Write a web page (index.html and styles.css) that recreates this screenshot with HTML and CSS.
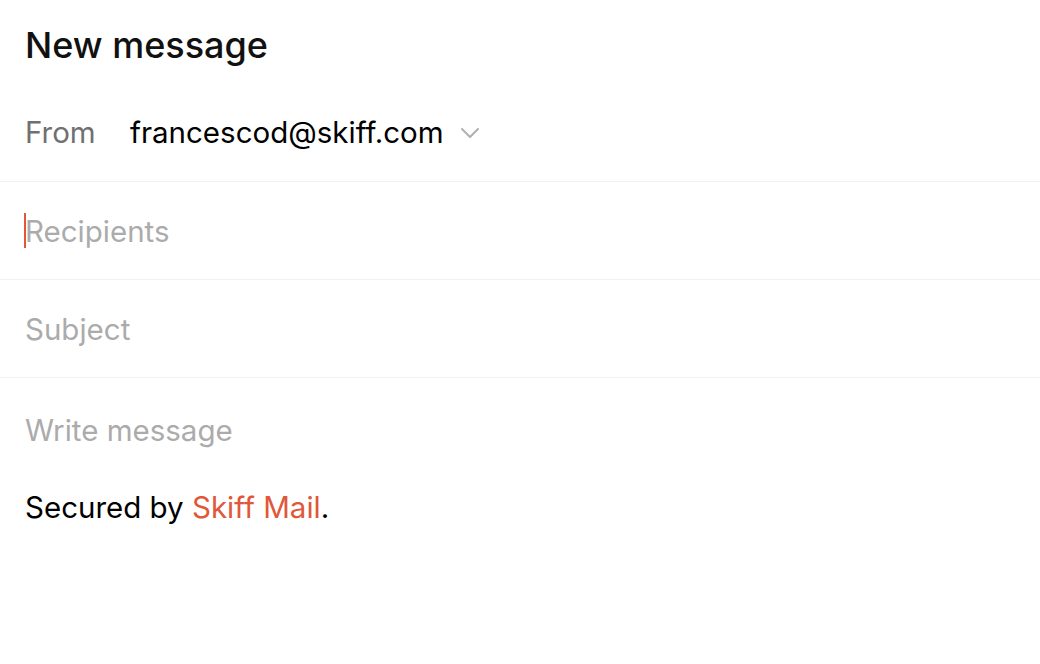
FILE: index.html
```html
<!DOCTYPE html>
<html>
<head>
<meta charset="utf-8">
<link rel="stylesheet" href="styles.css">
</head>
<body>
<div class="compose">
  <h1 class="title">New message</h1>
  <div class="row from-row">
    <span class="label">From</span>
    <span class="from-addr">francescod@skiff.com</span>
    <svg class="chevron" width="20" height="12" viewBox="0 0 20 12"><path d="M2 2 L10 10 L18 2" fill="none" stroke="#b0b0b0" stroke-width="2" stroke-linecap="round" stroke-linejoin="round"/></svg>
  </div>
  <div class="row field">
    <span class="caret"></span><span class="placeholder">Recipients</span>
  </div>
  <div class="row field">
    <span class="placeholder">Subject</span>
  </div>
  <div class="body">
    <p class="placeholder">Write message</p>
    <p class="sig">Secured by <span class="brand">Skiff Mail</span>.</p>
  </div>
</div>
</body>
</html>
```
FILE: styles.css
```css
* { box-sizing: border-box; }
html, body { margin: 0; padding: 0; background: #fff; }
body { font-family: Inter, "Noto Sans", sans-serif; color: #000; }
.compose { display: flex; flex-direction: column; }
.title { margin: 0; padding: 24px 25px 0; font-size: 36px; font-weight: 500; line-height: 42px; letter-spacing: 0; color: #111; }
.row { display: flex; align-items: center; padding: 0 25px; border-bottom: 1px solid #f1f1f1; height: 98px; font-size: 29.5px; }
.from-row { height: 116px; padding-top: 17px; }
.label { color: #707070; width: 105px; }
.from-addr { color: #000; }
.chevron { margin-left: 16px; margin-top: 2px; }
.caret { width: 2px; height: 35px; background: #e0573a; margin-left: -1px; margin-right: -1px; }
.placeholder { color: #ababab; }
.body { padding: 32px 25px; font-size: 29.5px; }
.body p { margin: 0; line-height: 40px; }
.sig { margin-top: 37px !important; }
.brand { color: #e0573a; }
```
